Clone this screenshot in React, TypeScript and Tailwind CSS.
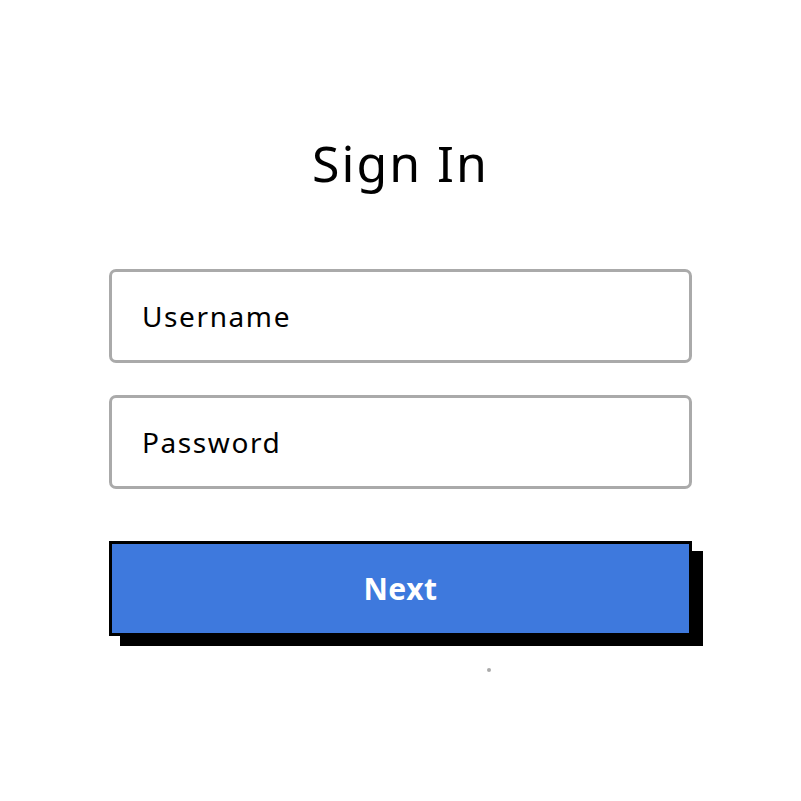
export default function App() {
  return (
    <div
      className="min-h-[801px] w-full bg-white text-black"
      style={{ fontFamily: '"Noto Sans", "Open Sans", sans-serif' }}
    >
      <div className="mx-auto flex w-[583px] flex-col pt-[128px]">
        {/* Title */}
        <h1 className="h-[70px] text-center text-[50px] leading-[70px] font-normal tracking-[2px]">Sign In</h1>

        {/* Fields */}
        <div className="mt-[71px] flex flex-col gap-[32px]">
          <input
            type="text"
            placeholder="Username"
            className="h-[94px] w-full rounded-[7px] border-[3px] border-[#aaaaaa] px-[30px] text-[28px] tracking-[1.6px] outline-none placeholder:text-black"
          />
          <input
            type="password"
            placeholder="Password"
            className="h-[94px] w-full rounded-[7px] border-[3px] border-[#aaaaaa] px-[30px] text-[28px] tracking-[1.6px] outline-none placeholder:text-black"
          />
        </div>

        {/* Next button */}
        <button className="mt-[52px] h-[95px] w-full border-[3px] border-black bg-[#3e79dd] text-[30px] font-bold tracking-[0.5px] text-white shadow-[11px_10px_0_0_#000]">
          Next
        </button>

        <div className="mt-[32px] ml-[378px] h-[4px] w-[4px] rounded-full bg-[#aaaaaa]" />
      </div>
    </div>
  );
}
